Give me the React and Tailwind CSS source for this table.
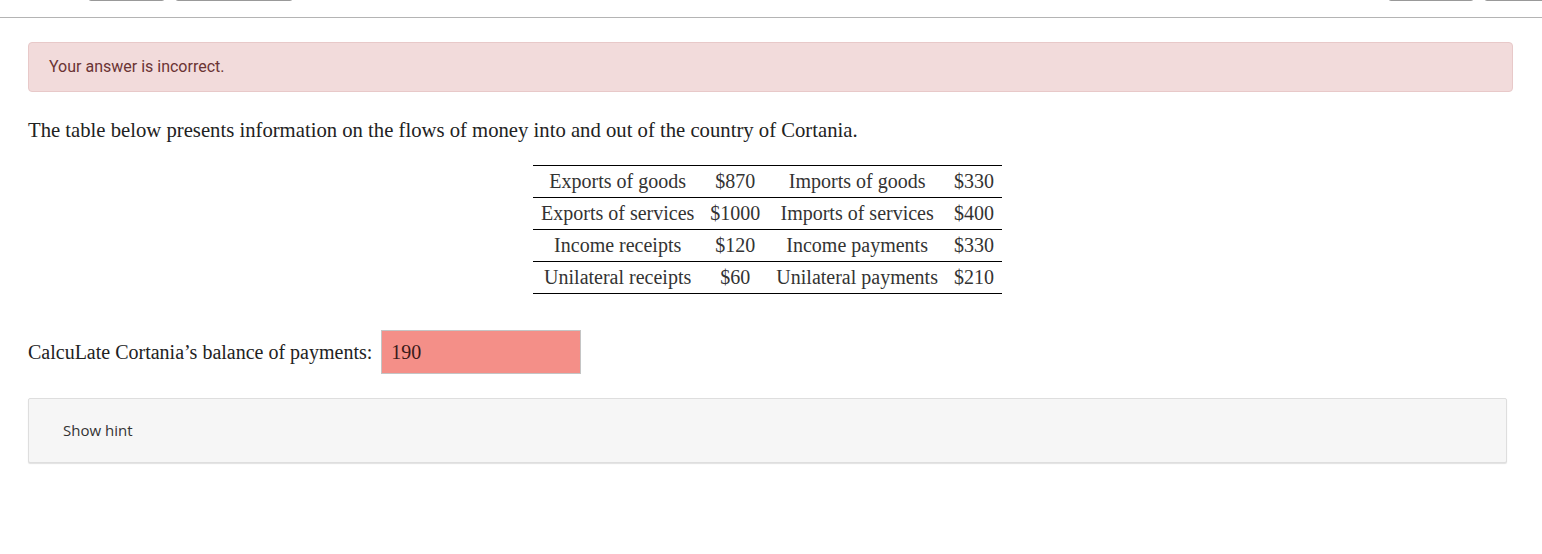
export default function App() {
  const rows = [
    ["Exports of goods", "$870", "Imports of goods", "$330"],
    ["Exports of services", "$1000", "Imports of services", "$400"],
    ["Income receipts", "$120", "Income payments", "$330"],
    ["Unilateral receipts", "$60", "Unilateral payments", "$210"],
  ];
  const serif = { fontFamily: '"Liberation Serif", serif' };
  const stub = "h-[11px] -mt-[10px] border border-[#999] rounded-b-[3px]";
  return (
    <div className="w-[1542px] h-[554px] bg-white overflow-hidden">
      <div className="h-[18px] border-b border-[#b4b4b4] flex justify-between pl-[88px]">
        <div className="flex gap-[10px]">
          <div className={`w-[77px] ${stub}`} />
          <div className={`w-[118px] ${stub}`} />
        </div>
        <div className="flex gap-[10px] -mr-[12px]">
          <div className={`w-[86px] ${stub}`} />
          <div className={`w-[70px] ${stub}`} />
        </div>
      </div>
      <div className="pl-[28px] pr-[29px]">
        <div
          className="mt-[24px] h-[50px] bg-[#f2dbdb] border border-[#e8c9c9] rounded-[4px] flex items-center pl-[20px] text-[16px] text-[#6b3434]"
          style={{ fontFamily: "Roboto, sans-serif" }}
        >
          Your answer is incorrect.
        </div>
        <p className="mt-[24px] text-[20.7px] leading-[28px] text-[#222]" style={serif}>
          The table below presents information on the flows of money into and out of the country of Cortania.
        </p>
        <div className="flex justify-center mt-[21px] pr-[6px]">
          <table className="border-collapse text-[20px] text-[#333]" style={serif}>
            <tbody>
              {rows.map((r, i) => (
                <tr key={i} className="border-t border-b border-black h-[32px]">
                  {r.map((c, j) => (
                    <td key={j} className="px-[8px] text-center leading-[31px] whitespace-nowrap">
                      {c}
                    </td>
                  ))}
                </tr>
              ))}
            </tbody>
          </table>
        </div>
        <div className="mt-[36px] flex items-center" style={serif}>
          <span className="text-[20px] text-[#222]">CalcuLate Cortania’s balance of payments:</span>
          <div className="ml-[9px] w-[200px] h-[44px] bg-[#f48f88] border border-[#c4c4c4] flex items-center pl-[9px] text-[20px] text-[#3a1a1a]">
            190
          </div>
        </div>
        <div
          className="mt-[24px] mr-[6px] h-[65px] bg-[#f6f6f6] border border-[#dedede] rounded-[2px] shadow-[0_1px_1px_rgba(0,0,0,0.12)] flex items-center pl-[34px] text-[15px] text-[#333]"
          style={{ fontFamily: '"Open Sans", sans-serif' }}
        >
          Show hint
        </div>
      </div>
    </div>
  );
}
